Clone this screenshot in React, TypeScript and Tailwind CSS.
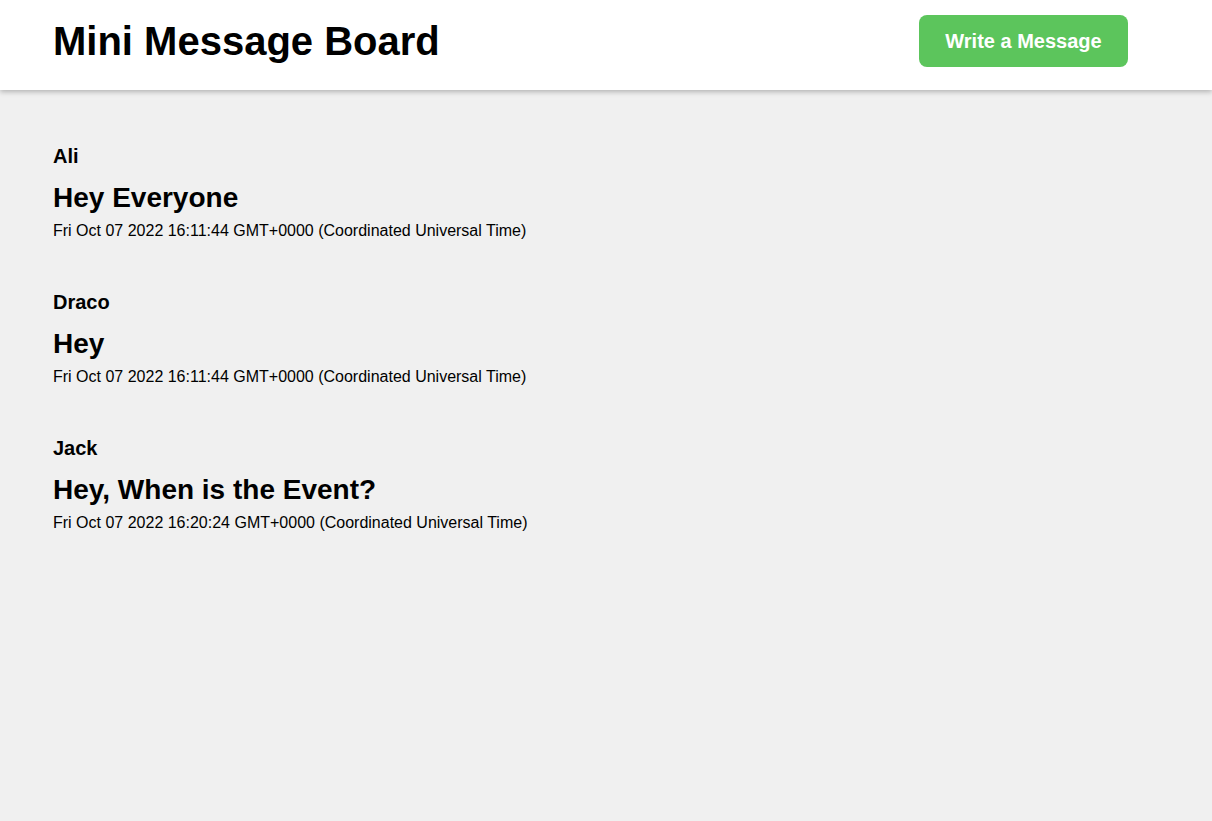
const messages = [
  { user: "Ali", text: "Hey Everyone", added: "Fri Oct 07 2022 16:11:44 GMT+0000 (Coordinated Universal Time)" },
  { user: "Draco", text: "Hey", added: "Fri Oct 07 2022 16:11:44 GMT+0000 (Coordinated Universal Time)" },
  { user: "Jack", text: "Hey, When is the Event?", added: "Fri Oct 07 2022 16:20:24 GMT+0000 (Coordinated Universal Time)" },
];

export default function App() {
  return (
    <div className="min-h-screen bg-[#f0f0f0] font-['Liberation_Sans',Arial,sans-serif] text-black">
      {/* Header */}
      <header className="relative z-10 flex items-center justify-between bg-white pt-[15px] pb-[23px] pl-[53px] pr-[84px] shadow-[0_2px_5px_rgba(0,0,0,0.25)]">
        <h1 className="text-[40px] font-bold leading-[48px]">Mini Message Board</h1>
        <button className="flex h-[52px] w-[209px] items-center justify-center rounded-lg bg-[#5cc55c] text-[20px] font-bold text-white">
          Write a Message
        </button>
      </header>

      {/* Messages */}
      <main className="flex flex-col gap-[49px] pt-[54px] pl-[53px]">
        {messages.map((m, i) => (
          <div key={i} className="flex flex-col">
            <p className="text-[20px] font-bold leading-[24px]">{m.user}</p>
            <h2 className="mt-[14px] text-[28px] font-bold leading-[32px]">{m.text}</h2>
            <p className="mt-[7px] text-[16px] leading-[20px]">{m.added}</p>
          </div>
        ))}
      </main>
    </div>
  );
}
